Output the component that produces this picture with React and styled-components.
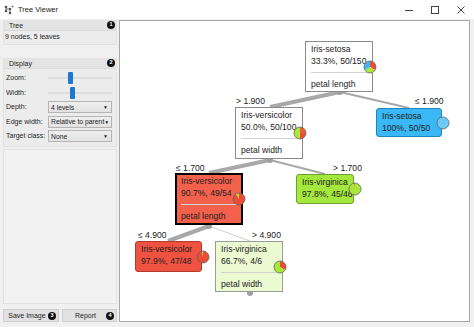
import React from "react";
import styled, { createGlobalStyle } from "styled-components";

const GlobalStyle = createGlobalStyle`
  html, body {
    margin: 0;
    padding: 0;
    background: #f0f0f0;
  }
  body {
    font-family: "Liberation Sans", Arial, sans-serif;
    font-size: 7px;
    color: #1e1e1e;
  }
`;

const Window = styled.div`
  width: 474px;
  height: 327px;
  display: flex;
  flex-direction: column;
  background: #f0f0f0;
  overflow: hidden;
`;

const TitleBar = styled.div`
  height: 19px;
  flex: none;
  display: flex;
  align-items: center;
  background: #ffffff;
  padding-left: 4px;
`;

const TitleText = styled.span`
  margin-left: 4px;
  font-size: 7.5px;
  color: #222;
`;

const WinControls = styled.div`
  margin-left: auto;
  display: flex;
  align-items: center;
  height: 100%;
`;

const WinButton = styled.div`
  width: 26px;
  height: 100%;
  display: flex;
  align-items: center;
  justify-content: center;
`;

const Body = styled.div`
  flex: 1;
  display: flex;
  padding: 1px 4px 5px 0;
  min-height: 0;
`;

const Sidebar = styled.div`
  width: 119px;
  flex: none;
  display: flex;
  flex-direction: column;
  padding: 0 2px 0 3px;
  box-sizing: border-box;
`;

const Group = styled.div`
  background: #ececec;
  border: 1px solid #e2e2e2;
  border-top: none;
  margin-bottom: ${(p) => p.gap || 0}px;
`;

const GroupHeader = styled.div`
  height: 10px;
  display: flex;
  align-items: center;
  justify-content: space-between;
  padding: 0 1px 0 5px;
  border-bottom: 1px solid #dadada;
  background: #e4e4e4;
`;

const Badge = styled.span`
  width: 8px;
  height: 8px;
  border-radius: 50%;
  background: #111;
  color: #fff;
  font-size: 5.5px;
  font-weight: bold;
  display: inline-flex;
  align-items: center;
  justify-content: center;
  line-height: 1;
  flex: none;
`;

const Info = styled.div`
  height: 13px;
  line-height: 11px;
  padding-left: 1px;
`;

const Form = styled.div`
  display: grid;
  grid-template-columns: 42px 66px;
  row-gap: 2.5px;
  padding: 3px 3px 4px 2px;
  align-items: center;
`;

const Label = styled.div`
  height: 12px;
  line-height: 12px;
  white-space: nowrap;
`;

const Slider = styled.div`
  position: relative;
  height: 12px;
  &::before {
    content: "";
    position: absolute;
    left: 0;
    right: 2px;
    top: 5px;
    height: 2px;
    background: #dedede;
  }
`;

const Handle = styled.div`
  position: absolute;
  top: 0;
  width: 5px;
  height: 12px;
  background: #1f78d1;
  border-radius: 1px;
`;

const Combo = styled.div`
  height: 10px;
  border: 1px solid #b4b4b4;
  background: linear-gradient(#efefef, #e2e2e2);
  display: flex;
  align-items: center;
  justify-content: space-between;
  padding: 0 3px 0 2px;
  box-sizing: content-box;
  margin-right: 2px;
  white-space: nowrap;
  font-size: 6.8px;
`;

const Arrow = styled.span`
  font-size: 5px;
  color: #222;
`;

const Filler = styled.div`
  flex: 1;
  margin-top: 2px;
  background: #f2f2f2;
  border: 1px solid #e2e2e2;
`;

const ButtonRow = styled.div`
  display: flex;
  gap: 3px;
  margin-top: 5px;
  height: 13px;
`;

const Button = styled.div`
  flex: ${(p) => p.grow};
  border: 1px solid #cfcfcf;
  background: #e1e1e1;
  display: flex;
  align-items: center;
  justify-content: center;
  position: relative;
  padding-right: 8px;
  & > span:last-child {
    position: absolute;
    right: 2px;
  }
`;

const Canvas = styled.div`
  flex: 1;
  position: relative;
  background: #ffffff;
  border: 1px solid #a8a8a8;
  overflow: hidden;
`;

const EdgeLayer = styled.svg`
  position: absolute;
  left: 0;
  top: 0;
`;

const Node = styled.div`
  position: absolute;
  box-sizing: border-box;
  padding: ${(p) => (p.selected ? "0 4px" : "1px 5px 0")};
  background: ${(p) => p.bg};
  border: ${(p) => (p.selected ? "2px solid #000" : `1px solid ${p.edge}`)};
  border-radius: ${(p) => (p.leaf ? 3 : 0)}px;
  line-height: 12px;
  font-size: 8.6px;
  white-space: nowrap;
  color: #222;
`;

const Rule = styled.div`
  height: 1px;
  background: #d2d2d2;
  margin: 5px 0 5px;
`;

const PieSpot = styled.svg`
  position: absolute;
  right: ${(p) => (p.leaf ? -9 : -5)}px;
  top: 50%;
  margin-top: -7px;
`;

const EdgeLabel = styled.div`
  position: absolute;
  font-size: 8.6px;
  line-height: 9px;
  color: #222;
  white-space: nowrap;
`;

const BLUE = "#3cb7f3";
const RED = "#ec4b34";
const GREEN = "#a8e838";

function Pie({ slices, leaf }) {
  const r = 6;
  let a = -Math.PI / 2;
  const paths = slices.map(([frac, color], i) => {
    const b = a + frac * Math.PI * 2;
    const large = frac > 0.5 ? 1 : 0;
    const d =
      frac >= 0.999
        ? null
        : `M7 7 L${7 + r * Math.cos(a)} ${7 + r * Math.sin(a)} A${r} ${r} 0 ${large} 1 ${7 + r * Math.cos(b)} ${7 + r * Math.sin(b)} Z`;
    a = b;
    return d ? (
      <path key={i} d={d} fill={color} />
    ) : (
      <circle key={i} cx="7" cy="7" r={r} fill={color} />
    );
  });
  return (
    <PieSpot leaf={leaf} width="14" height="14" viewBox="0 0 14 14">
      {paths}
      <circle cx="7" cy="7" r={r} fill="none" stroke="#666" strokeWidth="0.8" />
    </PieSpot>
  );
}

const nodes = [
  { id: "root", x: 185, y: 20, w: 68, h: 51, bg: "#fff", edge: "#8a8a8a", lines: ["Iris-setosa", "33.3%, 50/150"], split: "petal length", pie: [[0.333, RED], [0.06, "#f4c430"], [0.274, GREEN], [0.333, BLUE]] },
  { id: "vers", x: 115, y: 86, w: 68, h: 52, bg: "#fff", edge: "#8a8a8a", lines: ["Iris-versicolor", "50.0%, 50/100"], split: "petal width", pie: [[0.25, "#ee5a3c"], [0.25, RED], [0.04, "#f4c430"], [0.46, GREEN]] },
  { id: "setosa", x: 256, y: 87, w: 66, h: 29, bg: "#3ab8f6", edge: "#2185bd", leaf: true, lines: ["Iris-setosa", "100%, 50/50"], pie: [[1, "#6cc8f6"]] },
  { id: "red", x: 55, y: 152, w: 68, h: 52, bg: "#f3604b", selected: true, lines: ["Iris-versicolor", "90.7%, 49/54"], split: "petal length", pie: [[0.907, RED], [0.093, "#c8d830"]] },
  { id: "virg", x: 176, y: 153, w: 58, h: 30, bg: "#a4e83e", edge: "#6f9e2a", leaf: true, lines: ["Iris-virginica", "97.8%, 45/46"], pie: [[0.978, GREEN], [0.022, RED]] },
  { id: "botred", x: 15, y: 220, w: 67, h: 31, bg: "#ef5240", edge: "#b2392b", leaf: true, lines: ["Iris-versicolor", "97.9%, 47/48"], pie: [[0.979, RED], [0.021, GREEN]] },
  { id: "pale", x: 95, y: 220, w: 68, h: 51, bg: "#ecfad2", edge: "#9a9a9a", lines: ["Iris-virginica", "66.7%, 4/6"], split: "petal width", pie: [[0.333, RED], [0.667, GREEN]] },
];

const edges = [
  { from: [220, 71], to: [150, 86], w: 4 },
  { from: [220, 71], to: [289, 87], w: 2 },
  { from: [150, 139], to: [89, 152], w: 4 },
  { from: [150, 139], to: [205, 153], w: 2 },
  { from: [89, 205], to: [48, 220], w: 4 },
  { from: [89, 205], to: [130, 220], w: 1, light: true },
];

const dots = [
  [220, 71],
  [150, 139],
  [89, 205],
  [130, 272],
];

const labels = [
  { text: "> 1.900", x: 116, y: 76 },
  { text: "≤ 1.900", x: 295, y: 76 },
  { text: "≤ 1.700", x: 56, y: 143 },
  { text: "> 1.700", x: 213, y: 143 },
  { text: "≤ 4.900", x: 18, y: 210 },
  { text: "> 4.900", x: 132, y: 210 },
];

function TreeIcon() {
  return (
    <svg width="10" height="10" viewBox="0 0 10 10">
      <circle cx="2" cy="2" r="1.3" fill="#555" />
      <circle cx="2" cy="6" r="1.3" fill="#555" />
      <circle cx="6" cy="4" r="1.3" fill="#555" />
      <circle cx="6" cy="8" r="1.3" fill="#555" />
      <circle cx="8.5" cy="1.5" r="1" fill="#777" />
      <path d="M2 2 V6 M2 4 H6 M6 4 V8" stroke="#555" strokeWidth="0.8" fill="none" />
    </svg>
  );
}

export default function App() {
  return (
    <>
      <GlobalStyle />
      <Window>
        <TitleBar>
          <TreeIcon />
          <TitleText>Tree Viewer</TitleText>
          <WinControls>
            <WinButton>
              <svg width="10" height="10"><path d="M1 5.5 H9" stroke="#444" strokeWidth="1" /></svg>
            </WinButton>
            <WinButton>
              <svg width="10" height="10"><rect x="1.5" y="1.5" width="7" height="7" fill="none" stroke="#444" strokeWidth="1" /></svg>
            </WinButton>
            <WinButton>
              <svg width="10" height="10"><path d="M1.5 1.5 L8.5 8.5 M8.5 1.5 L1.5 8.5" stroke="#444" strokeWidth="1" /></svg>
            </WinButton>
          </WinControls>
        </TitleBar>
        <Body>
          <Sidebar>
            <Group gap={13}>
              <GroupHeader>
                <span>Tree</span>
                <Badge>1</Badge>
              </GroupHeader>
              <Info>9 nodes, 5 leaves</Info>
            </Group>
            <Group>
              <GroupHeader>
                <span>Display</span>
                <Badge>2</Badge>
              </GroupHeader>
              <Form>
                <Label>Zoom:</Label>
                <Slider><Handle style={{ left: 20 }} /></Slider>
                <Label>Width:</Label>
                <Slider><Handle style={{ left: 22 }} /></Slider>
                <Label>Depth:</Label>
                <Combo>4 levels<Arrow>▼</Arrow></Combo>
                <Label>Edge width:</Label>
                <Combo>Relative to parent<Arrow>▼</Arrow></Combo>
                <Label>Target class:</Label>
                <Combo>None<Arrow>▼</Arrow></Combo>
              </Form>
            </Group>
            <Filler />
            <ButtonRow>
              <Button grow={56}>Save Image<Badge>3</Badge></Button>
              <Button grow={55}>Report<Badge>4</Badge></Button>
            </ButtonRow>
          </Sidebar>
          <Canvas>
            <EdgeLayer width="350" height="300">
              {edges.map((e, i) => (
                <line
                  key={i}
                  x1={e.from[0]}
                  y1={e.from[1]}
                  x2={e.to[0]}
                  y2={e.to[1]}
                  stroke={e.light ? "#d0d0d0" : "#a8a8a8"}
                  strokeWidth={e.w}
                />
              ))}
              {dots.map(([x, y], i) => (
                <circle key={i} cx={x} cy={y} r="3" fill="#a0a0a0" />
              ))}
            </EdgeLayer>
            {labels.map((l) => (
              <EdgeLabel key={l.text} style={{ left: l.x, top: l.y }}>
                {l.text}
              </EdgeLabel>
            ))}
            {nodes.map((n) => (
              <Node
                key={n.id}
                bg={n.bg}
                edge={n.edge}
                leaf={n.leaf}
                selected={n.selected}
                style={{ left: n.x, top: n.y, width: n.w, height: n.h }}
              >
                {n.lines.map((t) => (
                  <div key={t}>{t}</div>
                ))}
                {n.split && <Rule />}
                {n.split && <div>{n.split}</div>}
                <Pie slices={n.pie} leaf={n.leaf} />
              </Node>
            ))}
          </Canvas>
        </Body>
      </Window>
    </>
  );
}
